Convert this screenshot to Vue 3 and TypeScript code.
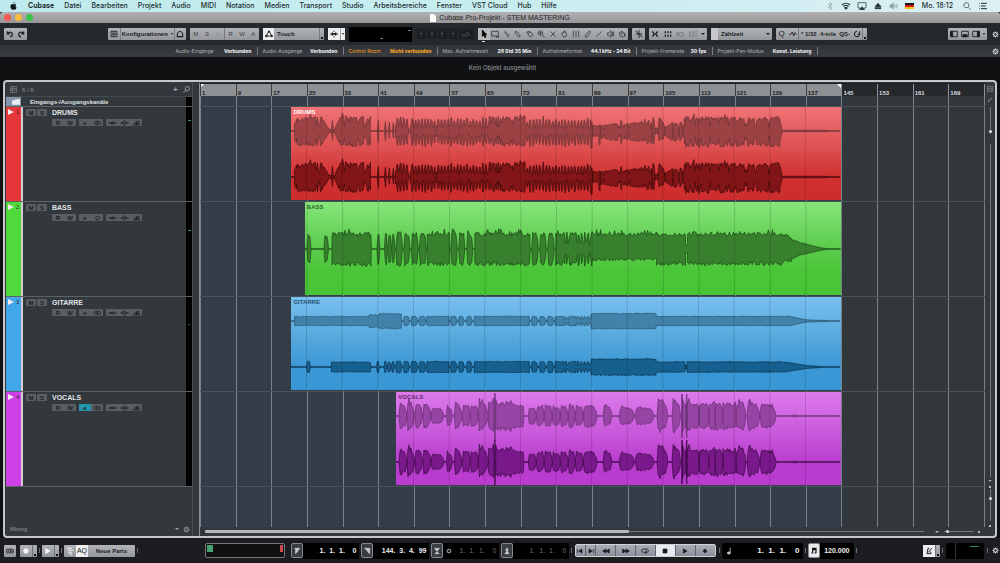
<script setup lang="ts">
type Shape = 'noise' | 'dense' | 'blob' | 'stripe' | 'line'
type Seg = [from: number, to: number, start: number, end: number, shape: Shape, down?: number]

interface Wave { y: number; d: string; tone: 'soft' | 'deep' | 'mid' }
interface Track {
  id: number
  name: string
  cls: string
  from: number
  waves: Wave[]
  linked: boolean
  active: boolean
}

/* Timeline units: 18 ruler steps cover 642 units, the visible span is 786. */
const SPAN = 786
const STEP = 35.68
const END = 642
const pct = (u: number) => (u / SPAN) * 100 + '%'

const marks = Array.from({ length: 22 }, (_, i) => ({ bar: 1 + i * 8, at: i * STEP }))
const rulerLine = (at: number) => ({ left: pct(at) })
const innerLines = (from: number) => marks.map(m => m.at - from).filter(x => x > 0 && x < END - from - 4)

function random(seed: number) {
  let s = seed
  return () => {
    s = (s * 16807) % 2147483647
    return s / 2147483647
  }
}

function waveform(segs: Seg[], y: number, from: number, seed: number): string {
  const rnd = random(seed)
  const up: string[] = []
  const low: string[] = []
  const put = (x: number, a: number, b: number) => {
    up.push(`${(x - from).toFixed(1)},${(y - a).toFixed(1)}`)
    low.push(`${(x - from).toFixed(1)},${(y + b).toFixed(1)}`)
  }
  let last = from
  for (const [s, e, a0, a1, shape, down = 1] of segs) {
    if (s > last) {
      put(last, 0.3, 0.3)
      put(s, 0.3, 0.3)
    }
    const len = e - s
    if (shape === 'line') {
      put(s, a0, a0)
      put(e, a1, a1)
    } else {
      const step = shape === 'stripe' ? 0.8 : 1
      let k = 0
      for (let x = s; x <= e; x += step) {
        const t = (x - s) / len
        const base = a0 + (a1 - a0) * t
        let f = 1
        if (shape === 'blob') f = Math.min(1, Math.sqrt(Math.min(t * 7, (1 - t) * 3.5)) + 0.05)
        if (shape === 'stripe') f = k % 4 < 2 ? 0.2 + rnd() * 0.35 : 0.9 + rnd() * 0.2
        if (shape === 'dense') f = rnd() > 0.8 ? 0.3 + rnd() * 0.4 : 1
        const lo = base < 9 ? 0.86 : 0.74
        const spike = rnd() > 0.9 && base > 9 ? 1.2 : 1
        put(x, base * f * spike * (lo + rnd() * (1 - lo)), base * f * down * (lo + rnd() * (1 - lo)))
        k++
      }
    }
    last = e
  }
  if (last < END - 1) {
    put(last, 0.3, 0.3)
    put(END - 1, 0.2, 0.2)
  }
  return 'M' + up.join('L') + 'L' + low.reverse().join('L') + 'Z'
}

const drums: Seg[] = [
  [95, 97, 9, 14, 'noise'], [97, 123, 14, 15, 'dense', 1.08], [123, 129, 13, 3, 'noise'], [129, 132, 1.5, 1.5, 'line'],
  [132, 134, 11, 11, 'blob'], [134.5, 136, 1.5, 2, 'line'], [136, 140, 4, 13, 'noise'], [140, 171, 16, 15, 'dense', 1.03],
  [178, 179.6, 12, 12, 'blob'], [185, 187, 12, 12, 'blob'], [189, 190.6, 9, 9, 'blob'], [193, 194.6, 9, 9, 'blob'],
  [196, 210, 14, 14, 'stripe', 1.1], [211, 236, 13, 13, 'stripe', 1.15], [237, 290, 12, 13, 'stripe', 1.2],
  [290, 326, 15, 15, 'dense', 1.06], [326, 329, 11, 10, 'stripe'], [329, 392, 12, 12, 'stripe', 1.25], [392, 393.4, 10, 10, 'noise', 2],
  [393.5, 400, 6, 5, 'noise'], [400, 401, 6, 6, 'noise', 2.4], [401.5, 420, 6, 8, 'dense', 1.3], [420, 424, 10, 12, 'stripe', 1.2],
  [424, 450, 7, 11, 'dense', 1.2], [450, 453, 9, 9, 'stripe', 1.4], [453, 456, 14, 14, 'blob', 1.2], [456, 459, 3, 3, 'noise'],
  [459, 466, 13, 9, 'blob', 0.8], [466, 474, 4, 9, 'noise', 1.2], [474, 480, 10, 7, 'blob', 1.2], [480, 484, 12, 6, 'blob'],
  [484, 487, 17, 12, 'stripe'], [487, 550, 15, 14, 'dense', 1.12], [550, 581, 13, 15, 'dense', 1.12], [581, 583, 12, 3, 'noise'],
  [583, 629, 0.7, 0.7, 'line'],
]
const beats: Seg[] = [
  [177, 180, 1, 1, 'blob'], [184.5, 187.5, 1, 1, 'blob'], [188, 191.5, 0.9, 0.9, 'blob'], [192, 195, 1, 1, 'blob'],
  [196, 202.5, 1, 1.1, 'blob'], [204, 210, 1.05, 1, 'blob'], [211.5, 218.5, 1, 1, 'blob'], [219.5, 226.5, 1, 1, 'blob'],
  [227.5, 249.5, 1, 1, 'noise'], [251, 257.5, 1.05, 1, 'blob'], [259, 265, 1, 1, 'blob'], [267, 273, 1, 1, 'blob'],
  [275, 330.5, 1, 1, 'noise'], [332, 338.5, 1, 1, 'blob'], [340, 346.5, 1, 1, 'blob'], [348, 354.5, 1, 1, 'blob'],
  [356, 365, 1, 1, 'noise'], [365, 371, 1, 1, 'stripe'], [371, 377, 1, 1, 'noise'], [377, 393, 1, 1, 'stripe'],
]
const scale = (segs: Seg[], k: number): Seg[] => segs.map(([s, e, a, b, shape]) => [s, e, a * k, b * k, shape])
const bass: Seg[] = [
  [107, 111, 16, 16, 'blob'], [124, 128.5, 15, 12, 'blob'], [132, 171.5, 17, 17, 'noise', 1.03], ...scale(beats, 17),
  [393, 457, 17, 17, 'noise', 0.72], [457, 486, 16, 16, 'noise', 1.05], [486, 488, 4, 4, 'line'],
  [488, 580, 17, 17, 'noise', 0.98], [580, 592, 17, 13, 'noise'], [592, 600, 11, 7, 'noise'], [600, 606, 7, 6, 'noise', 0.9],
  [606, 620, 5, 1.6, 'line'], [620, 629, 1.4, 0.3, 'line'],
]
const guitarTop: Seg[] = [
  [95, 170, 4.7, 4.9, 'noise'], [170, 180, 7, 6.5, 'noise'], [180, 202, 8, 8, 'noise'], ...scale(beats.slice(5), 4.9),
  [392, 457, 7.9, 8.2, 'noise', 1.03], [457, 591, 4.9, 4.9, 'noise'], [591, 606, 4.6, 1.4, 'line'], [606, 629, 1.2, 0.4, 'line'],
]
const guitarLow: Seg[] = [
  [107, 111, 6, 6, 'blob'], [132, 171.5, 5.4, 5.2, 'noise'], ...scale(beats, 5.8),
  [392, 457, 8.4, 8.6, 'noise', 1.03], [457, 486, 5.4, 5.4, 'noise'], [486.4, 487.4, 2, 2, 'line'],
  [488, 586, 5.6, 5.4, 'noise'], [586, 606, 5, 1.8, 'line'], [606, 624, 1.6, 0.4, 'line'],
]
const vocals: Seg[] = [
  [199.5, 207.5, 15, 9, 'blob'], [207.5, 215, 16, 10, 'blob'], [215.5, 223, 15, 10, 'blob'], [223.5, 231.5, 14, 9, 'blob'],
  [231.5, 244.5, 8.5, 7, 'blob'], [247, 253, 13, 6, 'blob'], [255, 262.5, 16, 8, 'blob'], [263, 271, 13, 10, 'blob'],
  [271, 279, 11, 10, 'blob'], [279, 289, 18, 8, 'blob'], [289, 294, 14, 16, 'noise'], [294, 294.6, 15, 15, 'line'],
  [295.4, 295.8, 23, 22, 'line'], [296.4, 301, 17, 13, 'noise'], [301, 312, 15, 16, 'noise'], [312, 324.5, 13, 12, 'noise'], [329, 337, 9, 8, 'blob'],
  [337, 345, 11, 9, 'blob'], [345, 353, 12, 10, 'blob'], [353, 361, 11, 9, 'blob'], [361, 369, 13, 9, 'blob'],
  [369, 376, 14, 10, 'blob'], [376, 384, 11, 9, 'blob'], [384, 398, 13, 10, 'blob'], [404, 412.5, 12, 9, 'blob'],
  [420, 435, 9.5, 8, 'blob'], [436, 454.5, 9.5, 9, 'blob'], [458, 468.5, 22, 12, 'blob', 0.9], [473, 481.5, 20, 11, 'blob'],
  [482.6, 483.2, 22, 21, 'line'], [483.4, 486.6, 17, 12, 'noise'], [487.2, 487.8, 18, 22, 'line'], [488, 500, 16, 12, 'noise'],
  [500, 510, 14, 13, 'blob'], [510, 516, 14, 15, 'noise'], [516, 524, 15, 13, 'blob'], [524, 537, 14, 12, 'noise'],
  [537, 546.5, 14, 15, 'blob'], [548, 561, 17, 11, 'blob'], [561, 577, 14, 11, 'blob'], [594, 598, 0.8, 0.8, 'line'],
]

const tracks: Track[] = [
  { id: 1, name: 'DRUMS', cls: 'red', from: 91.5, linked: true, active: false, waves: [
    { y: 24, d: waveform(drums, 24, 91.5, 77), tone: 'soft' }, { y: 70, d: waveform(drums, 70, 91.5, 77), tone: 'deep' }] },
  { id: 2, name: 'BASS', cls: 'green', from: 105, linked: false, active: false, waves: [
    { y: 47, d: waveform(bass, 47, 105, 311), tone: 'mid' }] },
  { id: 3, name: 'GITARRE', cls: 'blue', from: 91.5, linked: true, active: false, waves: [
    { y: 24, d: waveform(guitarTop, 24, 91.5, 91), tone: 'soft' }, { y: 70, d: waveform(guitarLow, 70, 91.5, 53), tone: 'deep' }] },
  { id: 4, name: 'VOCALS', cls: 'violet', from: 196.5, linked: true, active: true, waves: [
    { y: 24, d: waveform(vocals, 24, 196.5, 19), tone: 'soft' }, { y: 70, d: waveform(vocals, 70, 196.5, 19), tone: 'deep' }] },
]

const menu = ['Datei', 'Bearbeiten', 'Projekt', 'Audio', 'MIDI', 'Notation', 'Medien', 'Transport', 'Studio', 'Arbeitsbereiche', 'Fenster', 'VST Cloud', 'Hub', 'Hilfe']
const info = [
  ['Audio-Eingänge', 'Verbunden'], ['Audio-Ausgänge', 'Verbunden'], ['Control Room', 'Nicht verbunden'],
  ['Max. Aufnahmezeit', '28 Std 35 Min'], ['Aufnahmeformat', '44.1 kHz - 24 Bit'],
  ['Projekt-Framerate', '30 fps'], ['Projekt-Pan-Modus', 'Konst. Leistung'],
]

const gear = 'M6 1v2M6 9v2M1 6h2M9 6h2M2.5 2.5l1.4 1.4M8.1 8.1l1.4 1.4M2.5 9.5l1.4-1.4M8.1 3.9l1.4-1.4M6 3a3 3 0 1 0 .01 0'
const tools = [
  { name: 'Objektauswahl', d: 'M3.5 0v9.500l2.200-2 1.500 3.800 1.700-.7-1.600-3.600H10z', solid: true },
  { name: 'Auswahlbereich', d: 'M1 2h10v7H1zM8 10h4l-2 2z', solid: false },
  { name: 'Trennen', d: 'M2 1l5 6M5 4L2 5M7 7a1.500 1.500 0 1 0 2 2M7 7l3 0', solid: false },
  { name: 'Kleben', d: 'M2 2l3 1 4 5 0 2-2 0-5-5z', solid: false },
  { name: 'Löschen', d: 'M1 3l4-1 6 5-3 3-3-1zM3 5l4-2', solid: false },
  { name: 'Zoom', d: 'M5 1a3.500 3.500 0 1 0 .01 0M8 7l3 4M3 4.500h4M5 2.500v4', solid: false },
  { name: 'Stummschalten', d: 'M2 2l8 8M10 2l-8 8', solid: false },
  { name: 'Time Warp', d: 'M2 5l3 5h4l1-5-2-1v-2L6 2 5 4zM6 1v4', solid: false },
  { name: 'Comp', d: 'M2 1v10M6 1v10M10 1v10', solid: false },
  { name: 'Stift', d: 'M8 1l2 2-5 7-3 1 1-4z', solid: false },
  { name: 'Linie', d: 'M2 10l8-8', solid: false },
  { name: 'Wiedergabe', d: 'M1 4h2l3-3v10l-3-3H1zM8 3v6M10 2v8', solid: false },
  { name: 'Farbe', d: 'M2 4l4-2 4 3v4l-4 2-3-2zM6 2v3M10 5l1 5M4 6h4', solid: false },
]
const transport = [
  { name: 'Zum Anfang', d: 'M2 3v6M9 3v6L4 6z', wide: false, on: false },
  { name: 'Zum Ende', d: 'M10 3v6M3 3v6l5-3z', wide: false, on: false },
  { name: 'Rücklauf', d: 'M6 3v6L1 6zM11 3v6L6 6z', wide: true, on: false },
  { name: 'Vorlauf', d: 'M1 3v6l5-3zM6 3v6l5-3z', wide: true, on: false },
  { name: 'Cycle', d: '', wide: true, on: false },
  { name: 'Stop', d: 'M3 3h6v6H3z', wide: true, on: true },
  { name: 'Start', d: 'M3.500 2.500v7L9 6z', wide: true, on: false },
  { name: 'Aufnahme', d: 'M6 3.500a2.500 2.500 0 1 0 .01 0', wide: true, on: false },
]
const locators = [
  { name: 'Linker Locator', d: 'M2 2h8L4 10V3', value: '1.  1.  1.    0', dim: false, gear: false },
  { name: 'Rechter Locator', d: 'M2 2h8v8L4 3', value: '144.  3.  4.  99', dim: false, gear: false },
  { name: 'Punch In', d: 'M2 2h8M3 3h6L6 6zM3 10h6L6 7z', value: '1.  1.  1.    0', dim: true, gear: true },
  { name: 'Punch Out', d: 'M6 1v2M4 5l2-3 2 3zM3 10h6L6 6z', value: '1.  1.  1.    0', dim: true, gear: false },
]
const position = '1.  1.  1.    0'
</script>

<template>
  <div class="screen">
    <nav class="menubar">
      <svg class="apple" viewBox="0 0 12 14"><path d="M8.300 0C8.400 1.500 7.200 2.800 6 2.800 5.900 1.400 7 .2 8.300 0zM8.400 3.400c.9 0 1.900.5 2.500 1.400-2.100 1.300-1.700 4.100.5 5C10.700 11.700 9.700 13.500 8.500 13.500c-.9 0-1.200-.5-2.200-.5s-1.400.5-2.200.5C2.300 13.500.6 10.500.6 8c0-2.800 1.700-4.500 3.500-4.500 1 0 1.700.6 2.400.6s1.200-.7 1.900-.7z" /></svg>
      <a href="#" class="app">Cubase</a>
      <a v-for="m in menu" :key="m" href="#">{{ m }}</a>
      <div class="status">
        <svg class="faint" viewBox="0 0 12 12"><path d="M6 1v10M3 3l6 6-3 2M3 9l6-6-3-2M1 6h1M10 6h1" /></svg>
        <svg viewBox="0 0 14 12"><path d="M1 4.500c3.500-3.500 8.500-3.500 12 0M3.200 6.800c2.200-2.200 5.400-2.200 7.600 0M5.300 9c1-1 2.400-1 3.400 0L7 10.500z" stroke-width="1.600" /></svg>
        <svg viewBox="0 0 14 12"><path d="M4 9H1V1h12v8h-3" /><path class="solid" d="M7 7l4 4.500H3z" /></svg>
        <svg viewBox="0 0 12 12"><path class="solid" d="M6 2l4.500 5h-9zM1.500 8.500h9v1.500h-9z" /></svg>
        <svg class="faint" viewBox="0 0 12 12"><path class="solid" d="M0 4h2l3-3v10L2 8H0z" /><path d="M7 4v4M9 3v6M11 2v8" /></svg>
        <span class="flag"><i /><i /><i /></span>
        <span class="clock">Mo. 18:12</span>
        <svg class="search" viewBox="0 0 12 12"><path d="M5 1a3.800 3.800 0 1 0 .01 0M8 8l3.500 3.500" /></svg>
        <svg viewBox="0 0 14 12"><path d="M1 2h1M4 2h9M1 6h1M4 6h7M1 10h1M4 10h9" stroke-width="1.500" /></svg>
      </div>
    </nav>

    <header class="titlebar">
      <span class="lights"><button aria-label="Schließen" /><button aria-label="Minimieren" /><button aria-label="Vergrößern" /></span>
      <svg class="doc" viewBox="0 0 6 8"><path d="M0 0h4l2 2v6H0z" /></svg>
      <span>Cubase Pro-Projekt - STEM MASTERING</span>
    </header>

    <div class="toolbar">
      <div class="grp undo">
        <button aria-label="Rückgängig"><svg class="ic" viewBox="0 0 12 12"><path d="M2 2v4h4M2.500 5.500C5 2 10 3 9.500 7 9.300 9 7.500 10 6 10" stroke-width="1.800" /></svg></button>
        <button aria-label="Wiederholen"><svg class="ic" viewBox="0 0 12 12"><path d="M10 2v4H6M9.500 5.500C7 2 2 3 2.500 7 2.700 9 4.500 10 6 10" stroke-width="1.800" /></svg></button>
      </div>
      <div class="cluster">
        <div class="grp config">
          <button aria-label="Fensterlayout"><svg class="ic" viewBox="0 0 12 12"><path d="M1.500 2h9v8h-9zM4 4.500h4v3H4z" /></svg></button>
          <select aria-label="Konfigurationen"><option>Konfigurationen</option></select>
          <i class="down" />
          <button class="auto" aria-label="Automation"><svg class="ic" viewBox="0 0 12 12"><path d="M2 10V6c0-5 8-5 8 0v4zM1 10h10" stroke-width="1.500" /></svg></button>
        </div>
        <div class="grp letters"><button v-for="l in 'MSLRWA'" :key="l" :class="{ off: l === 'L' }">{{ l }}</button></div>
        <div class="grp touch">
          <span class="lit"><svg class="ic" viewBox="0 0 12 12"><path d="M2 9l3-6 2 0 3 6z" /><path class="solid" d="M6 1l1 2H5zM1 8h2v2H1zM9 8h2v2H9z" /></svg></span>
          <select aria-label="Automationsmodus"><option>Touch</option></select><i class="corner" />
        </div>
        <div class="grp scroll">
          <button class="lit" aria-label="Autoscroll"><svg class="ic" viewBox="0 0 12 12"><path d="M6 1v2M6 9v2M0 6h12" /><path class="solid" d="M3 4l3 2-3 2zM9 4L6 6l3 2z" /></svg></button>
          <button class="lit slim" aria-label="Autoscroll Optionen"><i class="down" /></button>
        </div>
        <div class="perf"><i /><i /></div>
        <div class="grp dark"><button v-for="n in 4" :key="n" :aria-label="'Kicker ' + n"><svg class="ic" viewBox="0 0 12 12"><path d="M6 2v8M4 5h4" /></svg></button><button aria-label="Raster verschieben"><svg class="ic" viewBox="0 0 12 12"><path d="M0 7h5l4-4v4h3M0 9h10" /></svg></button></div>
        <div class="grp tools">
          <button v-for="(t, i) in tools" :key="t.name" :aria-label="t.name" :class="{ picked: i === 0 }">
            <svg class="ic" viewBox="0 0 12 12"><path :class="{ solid: t.solid }" :d="t.d" /></svg>
          </button>
        </div>
        <div class="grp one"><button aria-label="Nulldurchgänge"><svg class="ic" viewBox="0 0 12 12"><path d="M6 0v12M1 2c3 0 3 4 5 4s2 4 5 4M1 6h10" /></svg></button></div>
        <div class="grp snap">
          <button aria-label="Raster"><svg class="ic" viewBox="0 0 12 12"><path d="M2 2l3 4-3 4M10 2L7 6l3 4" stroke-width="2" /></svg></button>
          <button aria-label="Rastertyp"><svg class="ic dots" viewBox="0 0 12 12"><path d="M1 2h2v3H1zM5 2h2v3H5zM9 2h2v3H9zM1 7h2v3H1zM5 7h2v3H5zM9 7h2v3H9z" /></svg></button>
          <button class="off" aria-label="Rasterbereich"><svg class="ic" viewBox="0 0 12 12"><path d="M0 4h3v4H0zM5 4h6v5H5z" /></svg></button>
          <button class="off" aria-label="Rasterlinie"><svg class="ic" viewBox="0 0 12 12"><path d="M1 3h6v6H1zM9 2h3M10.500 2v8" /></svg></button>
          <i class="down" />
        </div>
        <div class="grp grid"><span class="pale" /><select aria-label="Rastermodus"><option>Zählzeit</option></select><i class="down" /></div>
        <div class="grp quant">
          <button class="q">Q</button>
          <button class="iq" aria-label="Iterative Quantisierung"><svg class="ic" viewBox="0 0 12 12"><path d="M0 7l3-1 2-3 2 6 2-5 2 3" /></svg></button>
          <select aria-label="Quantisierung"><option>* 1/32&nbsp; 4-tole&nbsp; QS-</option></select>
          <button aria-label="Quantisierungsfeld"><svg class="ic" viewBox="0 0 12 12"><path d="M6 2a4 4 0 1 0 4 4M10 2v4H7" stroke-width="1.500" /></svg></button><i class="corner" />
        </div>
      </div>
      <div class="edge">
        <div class="grp zones">
          <button aria-label="Linke Zone"><svg class="ic" viewBox="0 0 12 12"><path d="M1 2h10v8H1z" /><path class="solid" d="M1 2h3v8H1z" /></svg></button>
          <button aria-label="Untere Zone"><svg class="ic" viewBox="0 0 12 12"><path d="M1 2h10v8H1z" /><path class="solid" d="M3 7h6v3H3z" /></svg></button>
          <button aria-label="Rechte Zone"><svg class="ic" viewBox="0 0 12 12"><path d="M1 2h10v8H1z" /><path class="solid" d="M8 2h3v8H8z" /></svg></button>
          <button class="slim" aria-label="Zonen Optionen"><i class="down" /></button>
        </div>
        <button class="gear" aria-label="Werkzeugzeile einrichten"><svg viewBox="0 0 12 12"><path :d="gear" /></svg></button>
      </div>
    </div>

    <div class="infobar">
      <dl>
        <div v-for="(item, i) in info" :key="item[0]" :class="{ warn: i === 2 }"><dt>{{ item[0] }}</dt><dd>{{ item[1] }}</dd></div>
      </dl>
      <button class="gear" aria-label="Statuszeile einrichten"><svg viewBox="0 0 12 12"><path :d="gear" /></svg></button>
    </div>
    <p class="objectline">Kein Objekt ausgewählt</p>

    <main class="project">
      <section class="tracklist">
        <div class="listhead">
          <svg viewBox="0 0 12 12"><path d="M1 1h10v10H1zM1 4h10M1 7h10M4 1v10" /></svg><span>6 / 6</span>
          <button class="add" aria-label="Spur hinzufügen">+</button>
          <button class="find" aria-label="Spur suchen"><svg viewBox="0 0 12 12"><path d="M7.500 1a3.500 3.500 0 1 0 .01 0M5 7l-4 4" stroke-width="1.800" /></svg></button>
        </div>
        <div class="folder">
          <span class="fold"><svg viewBox="0 0 9 6"><path d="M0 1h3l1-1h5v6H0z" /></svg></span>
          <b>Eingangs-/Ausgangskanäle</b><span class="meter" />
        </div>
        <article v-for="t in tracks" :key="t.id" class="track">
          <span class="strip" :class="t.cls"><svg viewBox="0 0 6 6"><path d="M0 0l6 3-6 3z" /></svg><em>{{ t.id }}</em></span>
          <div class="body">
            <div class="ms"><button>M</button><button>S</button></div>
            <div class="ctl">
              <h2>{{ t.name }}</h2>
              <div class="rows">
                <span><button>R</button><button>W</button></span>
                <span><button :class="{ active: t.active }">e</button><button aria-label="Kanäle"><svg viewBox="0 0 14 10"><path :d="t.linked ? 'M5 2a3 3 0 1 0 .01 0M9 2a3 3 0 1 0 .01 0' : 'M7 2a3 3 0 1 0 .01 0'" /></svg></button></span>
                <span>
                  <button aria-label="Zeitbasis"><svg viewBox="0 0 14 10"><path d="M0 5h14M7 3L4 5l3 2 3-2z" /></svg></button>
                  <button aria-label="Sperren"><svg viewBox="0 0 14 10"><path d="M0 5h14M7 1L3 5l4 4 4-4z" /></svg></button>
                  <button aria-label="Spuren"><svg viewBox="0 0 14 10"><path d="M1 8h12M4 8V5l3-2v5M8 8V3l3-1v6" /></svg></button>
                </span>
              </div>
            </div>
          </div>
          <span class="meter"><i :class="'m' + t.id" /></span>
        </article>
        <footer class="listfoot"><span>Mixing</span><i class="down" /><button class="gear" aria-label="Spurliste einrichten"><svg viewBox="0 0 12 12"><path :d="gear" /></svg></button></footer>
      </section>

      <section class="arrange">
        <div class="ruler">
          <span class="range" :style="{ width: pct(END) }"><i /><i /></span>
          <span v-for="m in marks" :key="m.bar" class="mark" :class="{ out: m.at > 640 }" :style="rulerLine(m.at)">{{ m.bar }}</span>
          <span class="mark out" :style="rulerLine(785)" />
        </div>
        <div class="lanes">
          <span class="zone" :style="{ width: pct(END) }" />
          <span v-for="m in marks" :key="m.bar" class="line" :style="rulerLine(m.at)" />
          <span class="line" :style="rulerLine(785)" />
          <div class="spacer" />
          <div v-for="t in tracks" :key="t.id" class="lane">
            <div class="clip" :class="t.cls" :style="{ left: pct(t.from), width: pct(END - t.from) }">
              <svg :viewBox="`0 0 ${END - t.from} 93`" preserveAspectRatio="none">
                <path v-for="w in t.waves" :key="w.y" :class="w.tone" :d="w.d" />
                <path v-for="x in innerLines(t.from)" :key="x" class="inner" :d="`M${x} 0V93`" />
              </svg>
              <b>{{ t.name }}</b>
            </div>
          </div>
        </div>
        <div class="hscroll">
          <div class="track-h"><span /></div>
          <i class="down" /><input class="hz" type="range" min="0" max="100" value="8" aria-label="Horizontaler Zoom"><i class="dot" />
        </div>
      </section>

      <aside class="vside">
        <svg viewBox="0 0 12 12"><path d="M1 1h10v10H1zM3 4h6v4H3z" /></svg>
        <svg class="pen" viewBox="0 0 12 12"><path d="M2 9l7-6M2 9l2 0" stroke-width="2" /></svg>
        <input class="vz top" type="range" min="0" max="100" value="95" aria-label="Wellenform-Zoom">
        <span class="vline" />
        <i class="down" /><i class="dot" />
        <input class="vz bottom" type="range" min="0" max="100" value="28" aria-label="Vertikaler Zoom">
        <i class="dot" />
      </aside>
    </main>

    <footer class="transport">
      <div class="side left">
        <div class="grp first"><button class="sq" aria-label="Audioleistung"><svg class="ic" viewBox="0 0 12 12"><path d="M3 2C0 5 0 8 3 10M9 2c3 3 3 6 0 8M6 3a3 3 0 1 0 .01 0M6 4v2.500h1.500" stroke-width="1.400" /></svg></button></div>
        <div class="grp"><button class="sq" aria-label="Aufnahmemodus"><svg class="ic white" viewBox="0 0 12 12"><path d="M6 2a4 4 0 1 0 .01 0" /></svg></button><span class="tiny"><i class="corner" /></span></div><i class="sep" />
        <div class="grp"><button class="sq" aria-label="Wiedergabemodus"><svg class="ic white" viewBox="0 0 12 12"><path d="M2 1l8 5-8 5z" /></svg></button><span class="tiny"><i class="corner" /></span></div><i class="sep" />
        <div class="grp parts"><button class="sq" aria-label="Spurmodus"><svg class="ic whiteline" viewBox="0 0 12 12"><path d="M1 2h8M3 5h8M3 8h6M5 11h4" stroke-width="1.600" /></svg></button><button class="lit aq">AQ</button><button class="neue">Neue Parts</button></div><i class="sep" />
      </div>
      <div class="center">
        <div class="cyclebar"><i /><i /></div>
        <div v-for="l in locators" :key="l.name" class="loc">
          <button :aria-label="l.name"><svg class="ic" viewBox="0 0 12 12"><path class="solid" :d="l.d" /></svg></button>
          <span :class="{ dim: l.dim }"><svg v-if="l.gear" viewBox="0 0 12 12"><path :d="gear" /></svg><output>{{ l.value }}</output></span>
        </div>
        <i class="sep" />
        <div class="grp play">
          <button v-for="b in transport" :key="b.name" :class="{ wide: b.wide, on: b.on }" :aria-label="b.name">
            <svg class="ic" viewBox="0 0 12 12"><path v-if="b.d" class="solid" :d="b.d" stroke-width="1" /><path v-else d="M4 8C0 8 0 3 4 3h4c4 0 4 5 0 5H6M8 5.500L5.500 8 8 10.500" stroke-width="1.500" /></svg>
          </button>
        </div>
        <i class="sep" />
        <div class="pos"><svg viewBox="0 0 10 12"><path d="M6 1v8" /><ellipse cx="4" cy="9" rx="2.200" ry="1.600" /></svg><output>{{ position }}</output></div>
        <i class="sep" />
        <div class="loc tempo"><button class="bright" aria-label="Tempospur"><svg class="ic" viewBox="0 0 12 12"><path d="M4 9V2l5 0v7M4 4h5M2 9h2M7 9h2" stroke-width="1.800" /></svg></button><span><output>120.000</output></span></div>
        <i class="sep" />
      </div>
      <div class="side right">
        <div class="grp"><button class="sq lit" aria-label="Metronom"><svg class="ic" viewBox="0 0 12 12"><path d="M3 10l1.500-8h2M3 10h6l-.5-3M5 8l5-6" stroke-width="1.500" /></svg></button><span class="tiny"><i class="corner" /></span></div><i class="sep" />
        <div class="level"><i /></div><i class="sep" />
        <button class="gear" aria-label="Transportfeld einrichten"><svg viewBox="0 0 12 12"><path :d="gear" /></svg></button>
      </div>
    </footer>
  </div>
</template>

<style>
html, body { margin: 0; background: #101112; }
</style>

<style scoped>
* { box-sizing: border-box; }
.screen { min-height: 100vh; display: flex; flex-direction: column; background: #101112; font: 6px/8px "Liberation Sans", Arial, sans-serif; color: #c9ccce; overflow: hidden; }
button, select, input { font: inherit; color: inherit; margin: 0; padding: 0; border: 0; background: none; min-width: 0; }
button { display: flex; align-items: center; justify-content: center; }
select { appearance: none; font-weight: 700; outline: 0; }
svg { display: block; fill: none; stroke: currentColor; flex: none; }
.solid { fill: currentColor; }
a { color: inherit; text-decoration: none; }

.menubar { height: 12px; display: flex; align-items: center; gap: 10px; padding: 0 12px 0 10px; background: linear-gradient(90deg, #bfeaed, #c8edef 50%, #dbeff4); color: #1d2c30; font: 500 7px/12px Inter, sans-serif; }
.apple { width: 7px; height: 8px; fill: #10191c; stroke: none; margin-right: 1px; }
.app { font-weight: 700; }
.status { margin-left: auto; display: flex; align-items: center; gap: 6px; }
.status svg { width: 10px; height: 8px; }
.status .faint { opacity: .4; }
.flag { width: 9px; height: 6px; display: grid; }
.flag i { background: #151515; }
.flag i:nth-child(2) { background: #d8161b; }
.flag i:nth-child(3) { background: #f4c51d; }
.clock { margin-left: 2px; }
.status .search { margin-left: 3px; }

.titlebar { height: 11px; display: grid; grid-template-columns: 1fr auto auto 1fr; align-items: center; gap: 3px; padding: 0 4px; background: linear-gradient(#b2b0b3, #979598); color: #252526; font: 7px/11px "Liberation Sans", Arial, sans-serif; border-radius: 3px 3px 0 0; }
.lights { display: flex; gap: 4px; }
.lights button { width: 7px; height: 7px; border-radius: 50%; background: #f45b52; }
.lights button:nth-child(2) { background: #f6b93c; }
.lights button:nth-child(3) { background: #36c646; }
.doc { width: 6px; height: 8px; fill: #fff; stroke: none; }

.toolbar { height: 22px; display: flex; justify-content: space-between; align-items: center; padding: 0 0 0 4px; background: #26292c; }
.cluster { display: flex; align-items: center; gap: 4px; }
.grp { position: relative; display: flex; align-items: stretch; height: 12px; background: linear-gradient(#b1b3b6, #95989c); color: #1b1d1f; border-radius: 1px; }
.grp > button { flex: 1; }
.ic { width: 8px; height: 8px; stroke-width: 1.3; }
.lit { background: #eceef0; }
.off { opacity: .3; }
.down { width: 0; height: 0; border: 2px solid transparent; border-top-color: currentColor; border-bottom: 0; align-self: center; margin: 0 2px; flex: none; }
.corner { position: absolute; right: 1px; bottom: 1px; border: 1px solid #111; }
.undo { width: 23px; }
.config { width: 78px; }
.config select { width: 51px; flex: none; padding-left: 1px; border-left: 1px solid #7a7d81; }
.config .down { margin: 0 1px 0 0; border-width: 2px 1px 0; }
.config .auto { border-left: 1px solid #7a7d81; }
.letters { width: 69px; color: #3b3e42; }
.letters button:nth-child(4) { border-left: 1px solid #75787c; }
.touch { width: 61px; }
.touch .lit { width: 11px; display: grid; place-items: center; }
.touch select { flex: 1; padding-left: 3px; }
.touch::after { content: ""; position: absolute; right: 4px; top: 0; bottom: 0; border-left: 1px solid #75787c; }
.scroll { width: 17px; gap: 1px; }
.grp > .slim { flex: 0 0 5px; }
.slim .down { margin: 0; border-width: 2px 1px 0; }
.scroll .slim { flex: 0 0 4px; }
.perf { width: 63px; height: 15px; background: #000; display: flex; justify-content: space-between; padding: 3px 1px 3px 31px; }
.perf i { width: 3px; height: 1px; background: #777; align-self: end; }
.perf i:last-child { align-self: start; }
.dark { width: 58px; background: #1c1e20; color: #4a4d50; }
.dark button { border: 1px solid #24272a; }
.dark button:last-child { flex: 1.6; }
.tools { width: 150px; color: #3b3e42; }
.tools .picked { color: #000; background: #b6b8ba; }
.tools button:first-child { position: relative; }
.tools .picked::after { content: ""; position: absolute; bottom: -2px; width: 3px; height: 1px; background: #ddd; }
.one { width: 13px; }
.snap { width: 58px; }
.dots { fill: currentColor; stroke: none; }
.grid { width: 61px; }
.grid .pale { width: 7px; background: #c6c8cb; }
.grid select { flex: 1; padding-left: 3px; }
.quant { width: 91px; padding-right: 5px; }
.quant .q { font: 8px/12px "Liberation Sans", sans-serif; }
.quant select { width: 53px; border-left: 1px solid #75787c; padding-left: 2px; }
.quant::after { content: ""; position: absolute; right: 4px; top: 0; bottom: 0; border-left: 1px solid #75787c; }
.edge { display: flex; align-items: center; gap: 3px; }
.zones { width: 39px; }
.gear { width: 10px; color: #d2d4d6; flex: none; }
.gear svg { width: 7px; height: 7px; stroke-width: 1.8; }

.infobar { height: 12px; display: flex; align-items: center; background: linear-gradient(#303337, #393c40); font: 5px/8px Inter, sans-serif; }
.infobar dl { flex: 1; margin: 0 0 0 -2px; display: grid; grid-template-columns: 87px 86px 94px 100px 99px 76px 105px; justify-content: center; }
.infobar dl div { display: flex; justify-content: space-between; padding: 0 5px; border-right: 1px solid #7a7e82; }
.infobar dt { color: #b0b3b6; }
.infobar dd { margin: 0; font-weight: 800; color: #e4e6e8; }
.infobar .warn dt, .infobar .warn dd { color: #f2a126; }
.objectline { height: 23px; margin: 0; font: 500 6px/22px Inter, sans-serif; text-align: center; padding-left: 5px; color: #8d9092; background: #101112; }

.project { flex: 1; margin: 0 3px; display: flex; border: 2px solid #c5c7ca; border-radius: 4px; background: #33383d; overflow: hidden; padding: 1px 0 0 1px; min-height: 430px; }
.tracklist { width: 187px; flex: none; display: flex; flex-direction: column; border-right: 1px solid #4b4f53; }
.listhead { height: 14px; display: flex; align-items: center; padding: 0 2px 0 4px; color: #8b8f93; border-bottom: 1px solid #44494e; }
.listhead svg { width: 7px; height: 7px; }
.listhead span { margin-left: 5px; }
.add { margin-left: auto; font: 700 8px/8px "Liberation Sans", sans-serif; color: #aaadb0; }
.find { margin-left: 5px; }
.folder { height: 9px; display: flex; align-items: stretch; color: #dfe1e3; }
.fold { width: 15px; background: #8195ab; display: grid; place-items: center end; padding-right: 1px; }
.fold svg { width: 8px; height: 6px; fill: #e9edf2; stroke: none; }
.folder b { flex: 1; padding-left: 9px; line-height: 10px; }
.meter { position: relative; width: 6px; background: #000; flex: none; }
.meter i { position: absolute; left: 2px; top: 13px; width: 3px; height: 1px; background: #2e9c7e; }
.meter .m2 { top: 28px; }
.meter .m3 { top: 27px; width: 2px; background: #2b6a5b; }
.meter .m4 { display: none; }
.track { height: 95px; display: flex; border-top: 1px solid #5d6267; }
.track:nth-last-of-type(1) { height: 96px; border-bottom: 1px solid #5d6267; }
.strip { width: 17px; border-right: 2px solid #d3cdd2; padding: 2px 2px 0; display: flex; justify-content: space-between; align-items: flex-start; }
.strip svg { width: 6px; height: 6px; fill: #f7e9ee; stroke: none; }
.strip em { font: 5px/6px "Liberation Sans", sans-serif; color: #222; }
.strip.red { background: #e53639; }
.strip.green { background: #4fd93c; }
.strip.blue { background: #42a7e8; }
.strip.violet { background: #cd41e6; }
.body { flex: 1; display: flex; gap: 5px; padding: 2px 0 0 3px; }
.ms { display: flex; gap: 1px; height: 7px; }
.ms button { width: 10px; background: #5a5e63; color: #1b1d1f; font-weight: 700; border-radius: 1px; }
.ctl h2 { margin: 0; font: 700 7px/8px "Liberation Sans", Arial, sans-serif; color: #e2e4e6; }
.rows { display: flex; gap: 3px; margin-top: 2px; }
.rows span { display: flex; background: #5a5e63; border-radius: 1px; height: 7px; }
.rows button { width: 12px; color: #1b1d1f; font-weight: 700; }
.rows svg { width: 9px; height: 6px; stroke-width: 1.4; }
.rows .active { background: #2496ab; }
.listfoot { margin-top: auto; height: 14px; display: flex; align-items: center; padding: 0 1px 0 4px; color: #999ca0; }
.listfoot span { flex: 1; }
.listfoot .gear { color: #8b8f93; }

.arrange { flex: 1; min-width: 0; display: flex; flex-direction: column; margin-left: 6px; border-left: 1px solid #8c9297; }
.ruler { position: relative; height: 13px; background: #26292c; border-top: 1px solid #1c1e20; }
.range { position: absolute; left: 0; top: 0; bottom: 0; background: #8d9194; }
.range i { position: absolute; top: 0; left: 0; border: 2px solid #fff; border-right-color: transparent; border-bottom-color: transparent; }
.range i + i { left: auto; right: 0; border-right-color: #fff; border-left-color: transparent; }
.mark { position: absolute; top: 0; bottom: 0; padding: 5px 0 0 1px; border-left: 1px solid #3c4044; color: #1a1c1e; font-weight: 700; line-height: 8px; }
.mark.out { color: #dcdee0; border-color: #8e9296; }
.lanes { position: relative; flex: 1; background: #32373b; }
.zone { position: absolute; left: 0; top: 0; bottom: 0; background: #323d48; }
.line { position: absolute; top: 0; bottom: 0; width: 1px; background: #78828a; }
.spacer { height: 10px; }
.lane { position: relative; height: 95px; border-top: 1px solid #4a535b; }
.lane:last-child { height: 96px; border-bottom: 1px solid #4a535b; }
.clip { position: absolute; top: 0; height: 93px; overflow: hidden; }
.clip svg { width: 100%; height: 100%; }
.clip path { stroke-width: .6; vector-effect: non-scaling-stroke; }
.clip .inner { stroke: #00000026; stroke-width: 1; }
.clip b { position: absolute; left: 2px; top: 1px; line-height: 8px; }
.clip.red { background: linear-gradient(#f07376, #dd4f50 45%, #d13030 75%, #cd2d2d); }
.clip.red b { color: #fff; }
.clip.red .soft { fill: #9d4244; stroke: #5a3033; }
.clip.red .deep { fill: #821517; stroke: #2a0608; }
.clip.green { background: linear-gradient(#86e67a, #5fcd50 45%, #4ac538 75%, #48c436); }
.clip.green b { color: #2c5f27; }
.clip.green .mid { fill: #38802e; stroke: #163c12; }
.clip.blue { background: linear-gradient(#78c0f0, #55a8dc 45%, #3b98d5 75%, #3996d4); }
.clip.blue b { color: #24516f; }
.clip.blue .soft { fill: #4182ab; stroke: #24485f; }
.clip.blue .deep { fill: #16608f; stroke: #08263c; }
.clip.violet { background: linear-gradient(#dd7aec, #c858da 45%, #b93dce 75%, #ba3bd0); }
.clip.violet b { color: #5f2a69; }
.clip.violet .soft { fill: #9745a5; stroke: #592a61; }
.clip.violet .deep { fill: #7a198b; stroke: #2a0731; }
.hscroll { height: 9px; display: flex; align-items: center; padding: 0 5px; color: #b5b7ba; background: #33383d; }
.track-h { flex: 1; background: linear-gradient(#777b80, #777b80) center / 100% 1px no-repeat; }
.track-h span { display: block; width: 59%; height: 3px; background: #b9b7ba; border-radius: 1px; }
.hscroll .down { margin: 0 5px 0 11px; }
.dot { width: 2px; height: 2px; background: #b5b7ba; flex: none; }
.hz { appearance: none; width: 30px; height: 4px; background: linear-gradient(#777b80, #777b80) center / 100% 1px no-repeat; margin-right: 4px; }
.hz::-webkit-slider-thumb, .vz::-webkit-slider-thumb { appearance: none; width: 3px; height: 3px; border-radius: 50%; background: #e0e2e4; }
.vside { width: 10px; flex: none; display: flex; flex-direction: column; align-items: center; color: #9a9da1; padding: 3px 0 8px; }
.vside svg { width: 6px; height: 6px; }
.vside .pen { margin: 5px 0 4px; }
.vz { appearance: none; writing-mode: vertical-lr; width: 4px; background: linear-gradient(#777b80, #777b80) center / 1px 100% no-repeat; }
.vz.top { height: 27px; }
.vline { flex: 1; width: 1px; margin: 10px 0 3px; background: #777b80; }
.vside .dot { margin: 4px 0 1px; }
.vz.bottom { height: 32px; }

.transport { height: 25px; display: flex; justify-content: space-between; align-items: center; padding: 0 0 0 4px; background: #1b1d21; }
.side, .center { display: flex; align-items: center; gap: 2px; }
.side .grp { height: 12px; }
.side .first { margin-right: 2px; }
.grp > .sq { flex: 0 0 12px; }
.tiny { position: relative; width: 5px; border-left: 1px solid #6d7074; }
.sep { width: 1px; height: 5px; background: #6d7175; flex: none; }
.white { fill: #f3f4f5; stroke: none; }
.whiteline { stroke: #f3f4f5; }
.parts { width: 71px; }
.parts .aq { flex: 0 0 12px; font-size: 7px; }
.parts .neue { font-weight: 700; }
.cyclebar { width: 80px; height: 15px; border: 1px solid #75787b; border-radius: 2px; background: #111; display: flex; justify-content: space-between; padding: 1px; margin-right: 4px; }
.cyclebar i { width: 6px; height: 7px; background: #45a273; }
.cyclebar i + i { width: 3px; background: #cc4a49; }
.loc { display: flex; align-items: center; }
.loc button { width: 12px; height: 15px; border: 1px solid #85888c; border-radius: 2px; background: #3a3d41; color: #c9cbce; }
.loc span { width: 56px; height: 16px; background: #000; display: flex; align-items: center; justify-content: space-between; padding: 0 2px 0 3px; color: #eceeef; }
.loc svg:not(.ic) { width: 6px; height: 6px; color: #a9c4dc; stroke-width: 1.6; }
.loc output, .pos output { margin-left: auto; font: 700 7px/16px "Liberation Sans", Arial, sans-serif; white-space: pre; }
.pos output { font-size: 8px; }
.loc .dim { color: #6b6e70; }
.loc .dim output { font-weight: 400; }
.play { width: 141px; height: 13px; margin: 0 1px; border: 1px solid #cfd1d4; border-radius: 2px; background: linear-gradient(#a8adb6, #8a9099); }
.play button { flex: 1; border-right: 1px solid #60656c; }
.play button:last-child { border-right: 0; }
.play .wide { flex: 2; }
.play .on { background: #e6ebf1; }
.pos { width: 81px; height: 16px; display: flex; align-items: center; background: #000; border-radius: 2px; padding: 0 3px 0 4px; color: #eceeef; }
.pos svg { width: 7px; height: 8px; fill: #bbb; }
.loc .bright { background: #e9ebed; color: #111; }
.tempo span { width: 34px; padding-right: 4px; }
.level { width: 38px; height: 16px; margin: 0 1px; background: linear-gradient(90deg, #000 9px, #333 9px, #333 10px, #000 10px); border-radius: 2px; padding: 3px 5px; display: flex; justify-content: flex-end; }
.level i { width: 9px; height: 1px; background: #2e8b62; }
</style>
